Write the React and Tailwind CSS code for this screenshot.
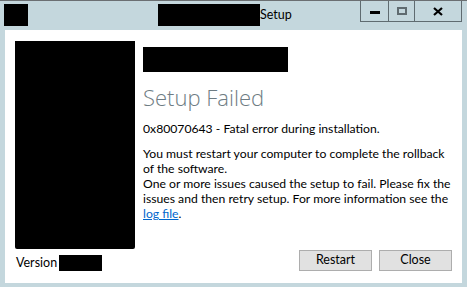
import React from "react";

function CaptionButtons() {
  return (
    <div className="flex h-[21px] self-start">
      <div className="w-[29px] h-full border border-t-0 border-[#5f6b70] flex items-center justify-center">
        <div className="w-[10px] h-[3px] bg-black mt-[2px]" />
      </div>
      <div className="w-[26px] h-full border border-t-0 border-l-0 border-[#5f6b70] flex items-center justify-center">
        <div className="w-[10px] h-[8px] border-2 border-[#5f6b70]" />
      </div>
      <div className="w-[47px] h-full border border-t-0 border-l-0 border-[#5f6b70] flex items-center justify-center">
        <svg width="10" height="9" viewBox="0 0 10 9">
          <path d="M1 1 L9 8 M9 1 L1 8" stroke="#000" strokeWidth="2.2" />
        </svg>
      </div>
    </div>
  );
}

export default function App() {
  return (
    <div
      className="w-[467px] h-[287px] bg-[#c4d7dd] border-t border-[#6b6f72] flex flex-col overflow-hidden"
      style={{ fontFamily: 'Lato, "Noto Sans", sans-serif' }}
    >
      <div className="h-[29px] flex items-start relative">
        <div className="w-[24px] h-[22px] bg-black ml-[4px] mt-[3px]" />
        <div className="absolute left-[158px] top-[3px] flex items-center">
          <div className="w-[102px] h-[22px] bg-black" />
          <span className="text-[12.5px] text-black leading-[22px]">Setup</span>
        </div>
        <div className="ml-auto mr-[5px] flex">
          <CaptionButtons />
        </div>
      </div>
      <div className="mx-[5px] h-[253px] bg-white flex pl-[10px] pt-[11px]">
        <div className="flex flex-col w-[120px]">
          <div className="w-[120px] h-[208px] bg-black rounded-b-[2px]" />
          <div className="flex items-center mt-[5px] text-[12.5px] text-black">
            <span className="ml-[1px] mr-[2px]">Version</span>
            <div className="w-[43px] h-[16px] bg-black" />
          </div>
        </div>
        <div className="flex flex-col ml-[8px] w-[310px] text-[12.2px] text-black">
          <div className="w-[145px] h-[25px] bg-black mt-[6px]" />
          <div
            className="text-[22px] font-light text-[#6e7c83] leading-[28px] mt-[11px]"
            style={{ fontFamily: '"Open Sans", sans-serif' }}
          >
            Setup Failed
          </div>
          <div className="leading-[15px] mt-[10px] whitespace-nowrap">
            0x80070643 - Fatal error during installation.
          </div>
          <div className="leading-[15px] mt-[10px] whitespace-nowrap">
            You must restart your computer to complete the rollback
            <br />
            of the software.
            <br />
            One or more issues caused the setup to fail. Please fix the
            <br />
            issues and then retry setup. For more information see the
            <br />
            <span className="text-[#0066cc] underline">log file</span>.
          </div>
          <div className="mt-auto mb-[12px] flex justify-end gap-[7px] pr-[1px] text-[12.5px]">
            <button className="w-[73px] h-[21px] bg-[#e1e1e1] border border-[#adadad] text-black">
              Restart
            </button>
            <button className="w-[73px] h-[21px] bg-[#e1e1e1] border border-[#adadad] text-black">
              Close
            </button>
          </div>
        </div>
      </div>
    </div>
  );
}
